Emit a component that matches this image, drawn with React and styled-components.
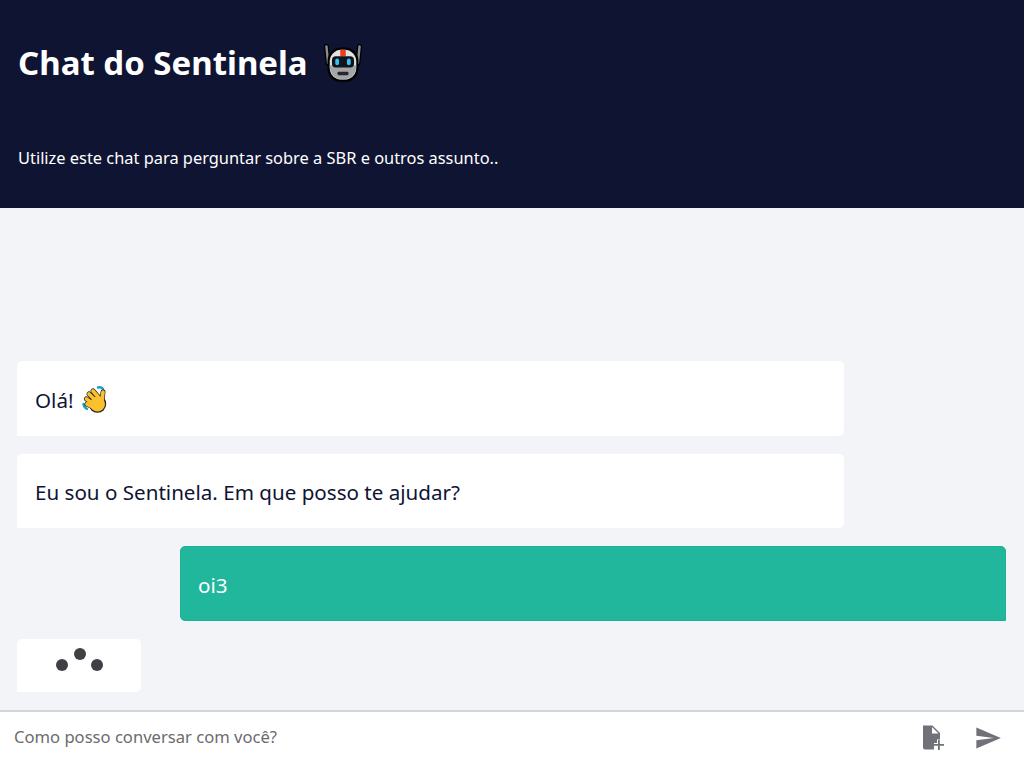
import React from "react";
import styled, { createGlobalStyle } from "styled-components";

const GlobalStyle = createGlobalStyle`
  html, body { margin: 0; padding: 0; height: 100%; }
  #root { height: 100%; }
  * { box-sizing: border-box; }
  body { font-family: "Noto Sans", "Open Sans", sans-serif; background: #f3f4f8; }
`;

const Page = styled.div`
  height: 764px;
  display: flex;
  flex-direction: column;
`;

const Header = styled.header`
  height: 208px;
  background: #0f1433;
  color: #fff;
  padding: 41px 18px 0;
`;

const Title = styled.h1`
  margin: 0;
  display: flex;
  align-items: center;
  gap: 14px;
  height: 44px;
  font-size: 33px;
  line-height: 44px;
  font-weight: 700;
`;

const Subtitle = styled.p`
  margin: 61px 0 0;
  font-size: 16.4px;
  line-height: 24px;
`;

const Messages = styled.main`
  flex: 1;
  display: flex;
  flex-direction: column;
  justify-content: flex-end;
  gap: 18px;
  padding: 0 18px 18px 17px;
`;

const Bubble = styled.div`
  width: ${(p) => (p.$mine ? "826px" : "827px")};
  height: 74.6px;
  align-self: ${(p) => (p.$mine ? "flex-end" : "flex-start")};
  display: flex;
  align-items: center;
  gap: 8px;
  padding: 3px ${(p) => (p.$mine ? "17px" : "18px")} 0;
  font-size: 20.6px;
  line-height: 27px;
  border-radius: ${(p) => (p.$mine ? "5px 5px 0 5px" : "5px 5px 5px 0")};
  border: ${(p) => (p.$mine ? "1px solid #1cb097" : "0")};
  background: ${(p) => (p.$mine ? "#20b79d" : "#fff")};
  color: ${(p) => (p.$mine ? "#fff" : "#0f1433")};
`;

const Typing = styled.div`
  width: 124px;
  height: 53px;
  background: #fff;
  border-radius: 5px 5px 5px 0;
  display: flex;
  justify-content: center;
  gap: 5.5px;
  padding: 20px 0 0 1px;
`;

const Dot = styled.span`
  width: 12px;
  height: 12px;
  border-radius: 50%;
  background: #3f3f46;
  margin-top: ${(p) => (p.$up ? "-11px" : "0")};
`;

const Composer = styled.footer`
  height: 54px;
  background: #fff;
  border-top: 2px solid #d4d5da;
  display: flex;
  align-items: center;
  padding: 0 22px 0 14px;
`;

const Input = styled.input`
  flex: 1;
  border: 0;
  outline: 0;
  padding: 0 0 4px;
  background: transparent;
  font: 16.6px "Noto Sans", sans-serif;
  color: #0f1433;
  &::placeholder { color: #6b6b70; opacity: 1; }
`;

const IconButton = styled.button`
  border: 0;
  background: none;
  padding: 0;
  width: 28px;
  height: 28px;
  margin-left: 26px;
  color: #71717a;
  display: flex;
  align-items: center;
  justify-content: center;
`;

const RobotIcon = () => (
  <svg width="42" height="42" viewBox="0 0 38 38">
    <path d="M4 4l1.500 15M34 4l-1.500 15" stroke="#000" strokeWidth="4.600" strokeLinecap="round" />
    <path d="M4 4l1.500 15M34 4l-1.500 15" stroke="#8b8d90" strokeWidth="2.200" strokeLinecap="round" />
    <rect x="5" y="5" width="28" height="31" rx="12" fill="#000" />
    <rect x="7" y="7" width="24" height="27" rx="10.500" fill="#e2e2e4" />
    <path d="M7 21c0 8 5 13 12 13s12-5 12-13z" fill="#a3a5a8" />
    <rect x="16.500" y="7" width="5" height="6" fill="#e8401f" />
    <rect x="9" y="13" width="20" height="10" rx="3.500" fill="#12141c" />
    <rect x="12" y="15" width="3.400" height="6" rx="1.700" fill="#2fc4f2" />
    <rect x="22.600" y="15" width="3.400" height="6" rx="1.700" fill="#2fc4f2" />
    <rect x="14" y="27" width="10" height="3" rx="1" fill="#24262b" />
  </svg>
);

const fingers = "M11 5l6 7M7 8l7 7M4.500 13l7 5M5 18l6 3M21 6l-1 8";

const WaveIcon = () => (
  <svg width="28" height="28" viewBox="0 0 28 28">
    <path d="M16 1.500c2-.5 4 0 5 1.500" stroke="#1f9fc4" strokeWidth="2.400" fill="none" strokeLinecap="round" />
    <path d="M1.500 18c.3 2 1.500 4 3.500 5" stroke="#1f9fc4" strokeWidth="2.400" fill="none" strokeLinecap="round" />
    <path d={fingers} stroke="#222" strokeWidth="5" strokeLinecap="round" fill="none" />
    <circle cx="15.500" cy="18" r="8.700" fill="#222" />
    <path d={fingers} stroke="#fbc02d" strokeWidth="3.700" strokeLinecap="round" fill="none" />
    <circle cx="15.500" cy="18" r="7.500" fill="#fbc02d" />
  </svg>
);

const FileIcon = () => (
  <svg width="28" height="28" viewBox="2 0 28 28" fill="currentColor">
    <path d="M5 1.500h9.500L22 9v6.500h-3V19h-3v6.500H7a2 2 0 0 1-2-2v-22z" />
    <path d="M14 3v6.500h6.500z" fill="#fff" />
    <path d="M20 16v4h-4v1.800h4V26h1.800v-4.200H26V20h-4.200v-4z" />
  </svg>
);

const SendIcon = () => (
  <svg width="28" height="28" viewBox="0 0 24 24" fill="currentColor">
    <path d="M2.010 21 23 12 2.010 3 2 10l15 2-15 2z" />
  </svg>
);

export default function App() {
  return (
    <Page>
      <GlobalStyle />
      <Header>
        <Title>
          Chat do Sentinela <RobotIcon />
        </Title>
        <Subtitle>Utilize este chat para perguntar sobre a SBR e outros assunto..</Subtitle>
      </Header>
      <Messages>
        <Bubble>
          Olá! <WaveIcon />
        </Bubble>
        <Bubble>Eu sou o Sentinela. Em que posso te ajudar?</Bubble>
        <Bubble $mine>oi3</Bubble>
        <Typing>
          <Dot />
          <Dot $up />
          <Dot />
        </Typing>
      </Messages>
      <Composer>
        <Input placeholder="Como posso conversar com você?" />
        <IconButton>
          <FileIcon />
        </IconButton>
        <IconButton>
          <SendIcon />
        </IconButton>
      </Composer>
    </Page>
  );
}
